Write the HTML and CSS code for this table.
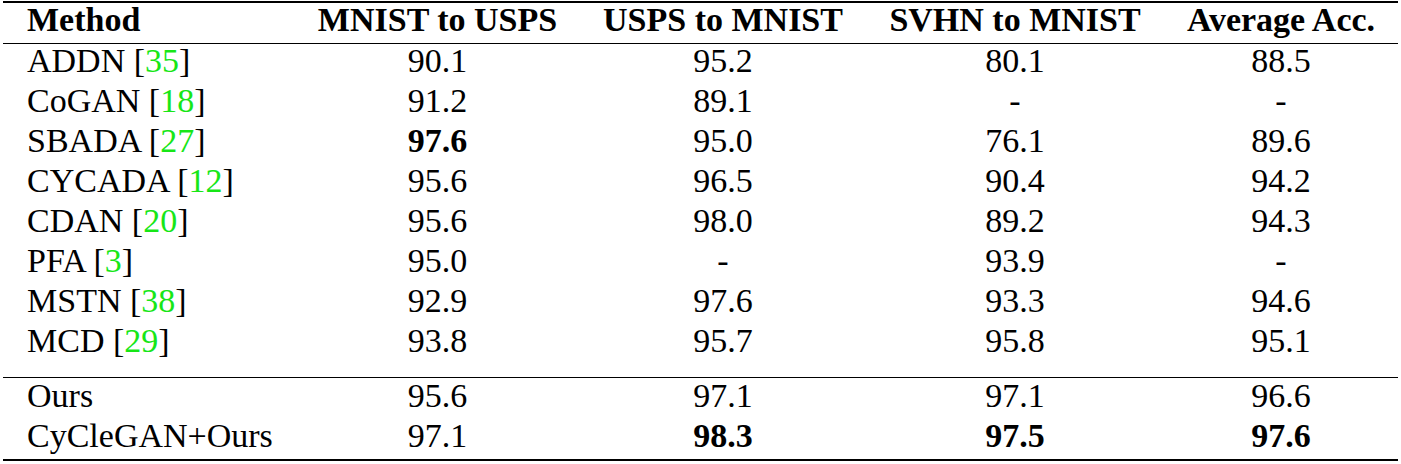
FILE: index.html
```html
<!DOCTYPE html>
<html>
<head>
<meta charset="utf-8">
<link rel="stylesheet" href="styles.css">
</head>
<body>
<table class="results">
  <colgroup>
    <col class="c-method">
    <col class="c-a">
    <col class="c-b">
    <col class="c-c">
    <col class="c-d">
  </colgroup>
  <thead>
    <tr>
      <th class="left">Method</th>
      <th>MNIST to USPS</th>
      <th>USPS to MNIST</th>
      <th>SVHN to MNIST</th>
      <th>Average Acc.</th>
    </tr>
  </thead>
  <tbody>
    <tr><td class="left">ADDN [<span class="cite">35</span>]</td><td>90.1</td><td>95.2</td><td>80.1</td><td>88.5</td></tr>
    <tr><td class="left">CoGAN [<span class="cite">18</span>]</td><td>91.2</td><td>89.1</td><td>-</td><td>-</td></tr>
    <tr><td class="left">SBADA [<span class="cite">27</span>]</td><td><b>97.6</b></td><td>95.0</td><td>76.1</td><td>89.6</td></tr>
    <tr><td class="left">CYCADA [<span class="cite">12</span>]</td><td>95.6</td><td>96.5</td><td>90.4</td><td>94.2</td></tr>
    <tr><td class="left">CDAN [<span class="cite">20</span>]</td><td>95.6</td><td>98.0</td><td>89.2</td><td>94.3</td></tr>
    <tr><td class="left">PFA [<span class="cite">3</span>]</td><td>95.0</td><td>-</td><td>93.9</td><td>-</td></tr>
    <tr><td class="left">MSTN [<span class="cite">38</span>]</td><td>92.9</td><td>97.6</td><td>93.3</td><td>94.6</td></tr>
    <tr class="group-end"><td class="left">MCD [<span class="cite">29</span>]</td><td>93.8</td><td>95.7</td><td>95.8</td><td>95.1</td></tr>
    <tr class="group-start"><td class="left">Ours</td><td>95.6</td><td>97.1</td><td>97.1</td><td>96.6</td></tr>
    <tr class="last"><td class="left">CyCleGAN+Ours</td><td>97.1</td><td><b>98.3</b></td><td><b>97.5</b></td><td><b>97.6</b></td></tr>
  </tbody>
</table>
</body>
</html>
```

FILE: styles.css
```css
html, body {
  margin: 0;
  padding: 0;
  background: #fff;
}

.results {
  margin: 1px 0 0 3px;
  width: 1395px;
  table-layout: fixed;
  border-collapse: separate;
  border-spacing: 0;
  font-family: "Liberation Serif", "Times New Roman", serif;
  font-size: 34px;
  color: #000;
}

.c-method { width: 292px; }
.c-a { width: 285px; }
.c-b { width: 286px; }
.c-c { width: 298px; }
.c-d { width: 234px; }

.results th,
.results td {
  padding: 0 0 6px 0;
  line-height: 34px;
  height: 34px;
  text-align: center;
  white-space: nowrap;
  vertical-align: top;
}

.results th {
  font-weight: bold;
  border-top: 2px solid #000;
  border-bottom: 1px solid #000;
}

.results .left {
  text-align: left;
  padding-left: 24px;
}

.results b {
  font-weight: bold;
}

.cite {
  color: #17e617;
}

.group-end td {
  padding-bottom: 19px;
  border-bottom: 1px solid #000;
}

.group-start td {
  padding-top: 1px;
}

.last td {
  border-bottom: 2px solid #000;
}
```
